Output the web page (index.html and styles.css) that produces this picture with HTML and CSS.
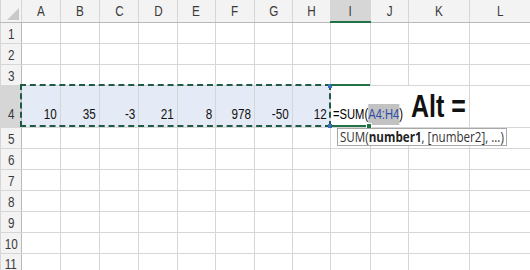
FILE: index.html
```html
<!DOCTYPE html>
<html>
<head>
<meta charset="utf-8">
<link rel="stylesheet" href="styles.css">
</head>
<body>
<div class="sheet">
  <table class="grid">
    <colgroup>
      <col class="w-hd"><col class="w39"><col class="w39"><col class="w39"><col class="w39"><col class="w38"><col class="w39"><col class="w38"><col class="w38"><col class="w40"><col class="w38"><col class="w61"><col class="w61">
    </colgroup>
    <tr class="r-hd">
      <th class="corner"><span class="tri"></span></th>
      <th><span class="t">A</span></th><th><span class="t">B</span></th><th><span class="t">C</span></th><th><span class="t">D</span></th><th><span class="t">E</span></th><th><span class="t">F</span></th><th><span class="t">G</span></th><th><span class="t">H</span></th><th class="hd-on col-on"><span class="t">I</span></th><th><span class="t">J</span></th><th><span class="t">K</span></th><th><span class="t">L</span></th>
    </tr>
    <tr class="r"><th class="rh"><span class="t">1</span></th><td></td><td></td><td></td><td></td><td></td><td></td><td></td><td></td><td></td><td></td><td></td><td></td></tr>
    <tr class="r"><th class="rh"><span class="t">2</span></th><td></td><td></td><td></td><td></td><td></td><td></td><td></td><td></td><td></td><td></td><td></td><td></td></tr>
    <tr class="r"><th class="rh"><span class="t">3</span></th><td></td><td></td><td></td><td></td><td></td><td></td><td></td><td></td><td></td><td></td><td></td><td></td></tr>
    <tr class="r4">
      <th class="rh hd-on"><span class="t">4</span></th>
      <td class="num sel"><span class="t">10</span></td>
      <td class="num sel"><span class="t">35</span></td>
      <td class="num sel"><span class="t">-3</span></td>
      <td class="num sel"><span class="t">21</span></td>
      <td class="num sel"><span class="t">8</span></td>
      <td class="num sel"><span class="t">978</span></td>
      <td class="num sel"><span class="t">-50</span></td>
      <td class="num sel"><span class="t">12</span></td>
      <td class="fx" colspan="3"><span class="ft">=SUM(<span class="ref">A4:H4</span>)</span><span class="alt">Alt =</span></td>
      <td></td>
    </tr>
    <tr class="r"><th class="rh"><span class="t">5</span></th><td></td><td></td><td></td><td></td><td></td><td></td><td></td><td></td><td></td><td></td><td></td><td></td></tr>
    <tr class="r"><th class="rh"><span class="t">6</span></th><td></td><td></td><td></td><td></td><td></td><td></td><td></td><td></td><td></td><td></td><td></td><td></td></tr>
    <tr class="r"><th class="rh"><span class="t">7</span></th><td></td><td></td><td></td><td></td><td></td><td></td><td></td><td></td><td></td><td></td><td></td><td></td></tr>
    <tr class="r"><th class="rh"><span class="t">8</span></th><td></td><td></td><td></td><td></td><td></td><td></td><td></td><td></td><td></td><td></td><td></td><td></td></tr>
    <tr class="r"><th class="rh"><span class="t">9</span></th><td></td><td></td><td></td><td></td><td></td><td></td><td></td><td></td><td></td><td></td><td></td><td></td></tr>
    <tr class="r"><th class="rh"><span class="t">10</span></th><td></td><td></td><td></td><td></td><td></td><td></td><td></td><td></td><td></td><td></td><td></td><td></td></tr>
    <tr class="r last"><th class="rh"><span class="t">11</span></th><td></td><td></td><td></td><td></td><td></td><td></td><td></td><td></td><td></td><td></td><td></td><td></td></tr>
  </table>

  <div class="marquee"></div>
  <span class="knob k1"></span>
  <span class="knob k2"></span>
  <div class="active"></div>
  <span class="fill-handle"></span>
  <div class="tooltip"><span class="tt">SUM(<b>number1</b>, [number2], ...)</span></div>
</div>
</body>
</html>
```

FILE: styles.css
```css
html, body {
  margin: 0;
  padding: 0;
  background: #fff;
}
body {
  width: 530px;
  height: 270px;
  overflow: hidden;
  font-family: "Liberation Sans", Arial, sans-serif;
}
.sheet {
  position: relative;
  width: 530px;
  height: 270px;
  overflow: hidden;
}
.grid {
  border-collapse: collapse;
  table-layout: fixed;
  width: 530px;
}
.w-hd { width: 21px; }
.w38 { width: 38px; }
.w39 { width: 39px; }
.w40 { width: 40px; }
.w61 { width: 61px; }

.grid td, .grid th {
  padding: 0;
  border: 1px solid #d6d6d6;
  font-size: 15px;
  line-height: 16px;
  overflow: visible;
  white-space: nowrap;
}
.grid th {
  background: #f3f3f3;
  color: #3a3a3a;
  font-weight: normal;
  border-color: #d6d6d6;
}
.r-hd { height: 22px; }
.r-hd th {
  border-top: none;
  border-bottom: 1px solid #b9b9b9;
  vertical-align: middle;
  text-align: center;
}
.r { height: 21px; }
.r4 { height: 42px; }
.rh {
  border-left: none;
  border-right: 1px solid #b9b9b9 !important;
  text-align: center;
  vertical-align: bottom;
}
.r .rh { padding-bottom: 1px; }
.r.last .rh {
  vertical-align: top;
  padding: 2px 0 0;
}
.r4 .rh { padding-bottom: 5px; }

.t {
  display: inline-block;
  transform: scaleX(0.78);
}
.corner {
  position: relative;
}
.tri {
  position: absolute;
  right: 2px;
  bottom: 2px;
  width: 0;
  height: 0;
  border-left: 12px solid transparent;
  border-bottom: 12px solid #c9c9c9;
}
.hd-on {
  background: #d6d6d6 !important;
}
.col-on {
  border-bottom: 2px solid #217346 !important;
}
.r4 td {
  vertical-align: bottom;
  padding-bottom: 5px;
}
.num {
  text-align: right;
  padding-right: 3px !important;
  color: #111;
}
.num .t { transform-origin: right center; }
.sel { background: #e5ebf6; }

.fx {
  border-left: none;
  position: relative;
  text-align: left;
}
.ft {
  display: inline-block;
  font-size: 14px;
  transform: scaleX(0.8);
  transform-origin: left center;
  margin-left: 2px;
  color: #000;
}
.ref {
  color: #2f4fa6;
  background: #c2c2c2;
  padding: 2px 0 3px;
}
.alt {
  position: absolute;
  left: 80px;
  bottom: 6px;
  font-size: 32px;
  line-height: 30px;
  font-weight: bold;
  color: #111;
  transform: scaleX(0.78);
  transform-origin: left bottom;
}

.marquee {
  position: absolute;
  left: 20px;
  top: 84px;
  width: 311px;
  height: 43px;
  box-sizing: border-box;
  border: 2px dashed #1e5a44;
}
.knob {
  position: absolute;
  width: 4px;
  height: 4px;
  background: #3b6fc4;
}
.k1 { left: 328px; top: 84px; }
.k2 { left: 328px; top: 124px; }
.active {
  position: absolute;
  left: 331px;
  top: 84px;
  width: 39px;
  height: 43px;
  box-sizing: border-box;
  border-top: 2px solid #217346;
  border-bottom: 2px solid #217346;
}
.fill-handle {
  position: absolute;
  left: 366px;
  top: 123px;
  width: 4px;
  height: 4px;
  background: #217346;
  border: 1px solid #fff;
}
.tooltip {
  position: absolute;
  left: 337px;
  top: 128px;
  width: 170px;
  height: 18px;
  box-sizing: border-box;
  background: #fff;
  border: 1px solid #a8a8a8;
  font-family: "Open Sans", "Noto Sans", sans-serif;
  font-size: 14px;
  line-height: 16px;
  color: #333;
  white-space: nowrap;
  overflow: hidden;
}
.tt {
  display: inline-block;
  transform: scaleX(0.83);
  transform-origin: left center;
  margin-left: 2px;
}
.tt b { font-weight: bold; color: #222; }
```
